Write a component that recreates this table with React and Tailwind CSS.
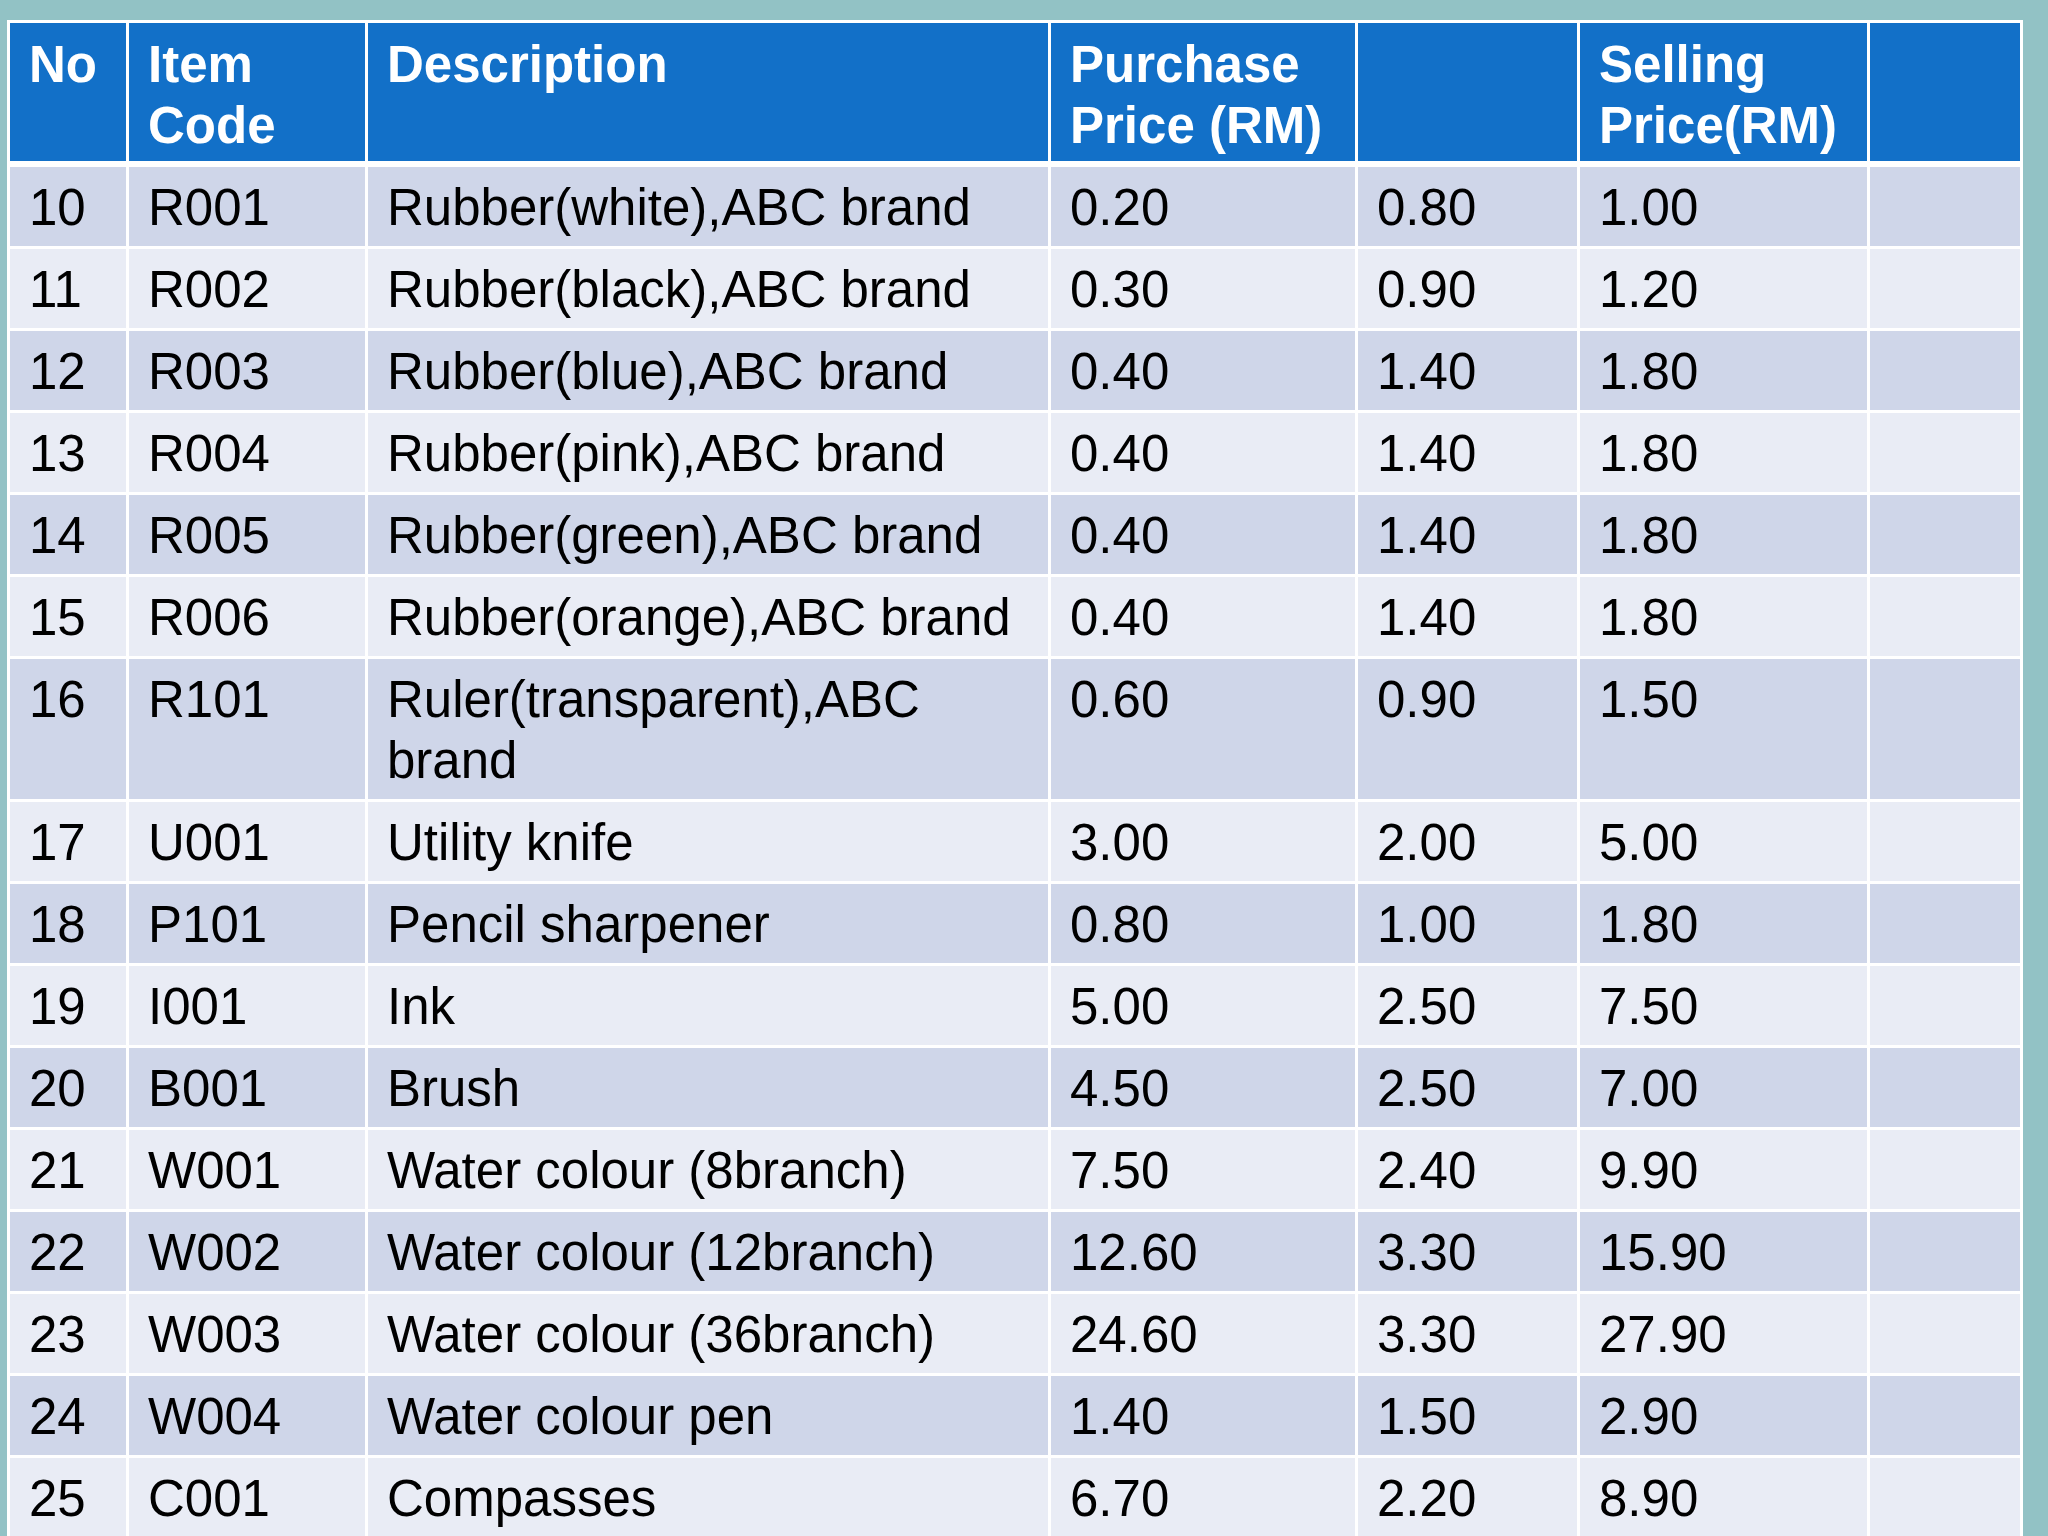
import React from 'react';

const cols = 'grid grid-cols-[116px_236px_680px_304px_219px_287px_150px] gap-x-[3px]';

const items = [
  ['10', 'R001', 'Rubber(white),ABC brand', '0.20', '0.80', '1.00'],
  ['11', 'R002', 'Rubber(black),ABC brand', '0.30', '0.90', '1.20'],
  ['12', 'R003', 'Rubber(blue),ABC brand', '0.40', '1.40', '1.80'],
  ['13', 'R004', 'Rubber(pink),ABC brand', '0.40', '1.40', '1.80'],
  ['14', 'R005', 'Rubber(green),ABC brand', '0.40', '1.40', '1.80'],
  ['15', 'R006', 'Rubber(orange),ABC brand', '0.40', '1.40', '1.80'],
  ['16', 'R101', ['Ruler(transparent),ABC', 'brand'], '0.60', '0.90', '1.50'],
  ['17', 'U001', 'Utility knife', '3.00', '2.00', '5.00'],
  ['18', 'P101', 'Pencil sharpener', '0.80', '1.00', '1.80'],
  ['19', 'I001', 'Ink', '5.00', '2.50', '7.50'],
  ['20', 'B001', 'Brush', '4.50', '2.50', '7.00'],
  ['21', 'W001', 'Water colour (8branch)', '7.50', '2.40', '9.90'],
  ['22', 'W002', 'Water colour (12branch)', '12.60', '3.30', '15.90'],
  ['23', 'W003', 'Water colour (36branch)', '24.60', '3.30', '27.90'],
  ['24', 'W004', 'Water colour pen', '1.40', '1.50', '2.90'],
  ['25', 'C001', 'Compasses', '6.70', '2.20', '8.90'],
];

const headers = [['No'], ['Item', 'Code'], ['Description'], ['Purchase', 'Price (RM)'], [''], ['Selling', 'Price(RM)'], ['']];

const Cell = ({ children, tall }) => (
  <div className={`pl-[19px] pr-2 pt-[10px] leading-[61px] whitespace-nowrap ${tall ? 'h-[140px]' : 'h-[79px]'}`}>
    {children}
  </div>
);

const App = () => {
  return (
    <div
      className="w-[2048px] h-[1536px] overflow-hidden bg-[#92c2c5] pt-[20px] pl-[7px]"
      style={{ fontFamily: '"Liberation Sans", Arial, sans-serif' }}
    >
      <div className="w-[2016px] bg-white p-[3px] pb-0 flex flex-col gap-y-[3px] text-[51px] text-black">
        {/* Header */}
        <div className={`${cols} mb-[3px]`}>
          {headers.map((h, i) => (
            <div key={i} className="bg-[#1270c8] h-[138px] pl-[19px] pt-[11px] leading-[61px] font-bold text-white whitespace-nowrap">
              {h.map((line, j) => (
                <div key={j}>{line}</div>
              ))}
            </div>
          ))}
        </div>

        {/* Rows */}
        {items.map((row, r) => {
          const bg = r % 2 === 0 ? 'bg-[#cfd6e9]' : 'bg-[#e9ecf5]';
          const tall = Array.isArray(row[2]);
          return (
            <div key={row[0]} className={cols}>
              {[...row, ''].map((val, c) => (
                <div key={c} className={bg}>
                  <Cell tall={tall}>
                    {Array.isArray(val) ? val.map((line, j) => <div key={j}>{line}</div>) : val}
                  </Cell>
                </div>
              ))}
            </div>
          );
        })}
      </div>
    </div>
  );
};

export default App;
